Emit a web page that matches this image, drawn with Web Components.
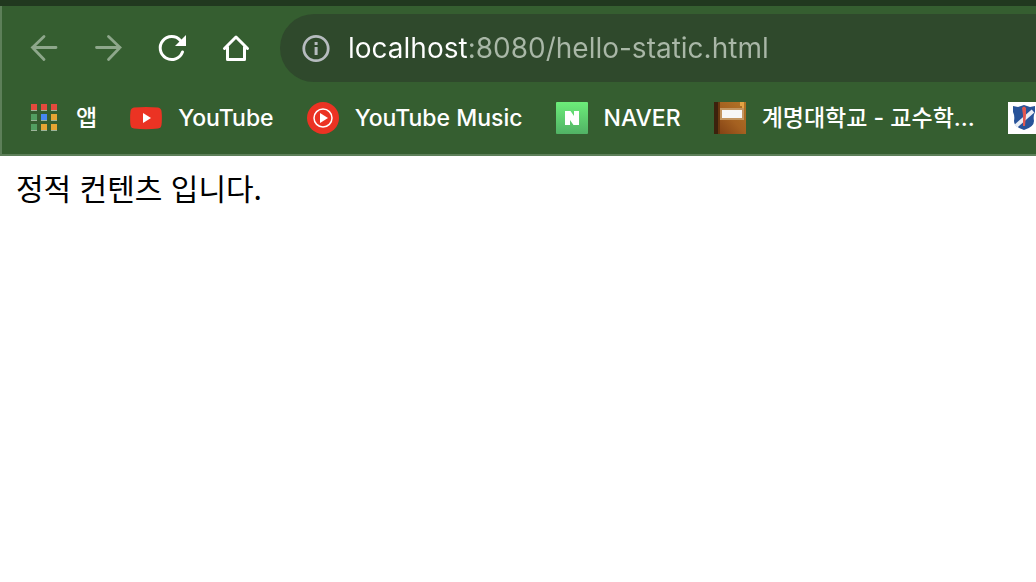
<!DOCTYPE html>
<html lang="ko">
<head>
<meta charset="utf-8">
<title>static content</title>
<style>
html, body { margin: 0; background: #fff; }
body { font-family: Inter, "Noto Sans CJK KR", sans-serif; color: #000; overflow-x: hidden; }
</style>
</head>
<body>
<browser-window></browser-window>
<script>
const define = (name, html) => customElements.define(name, class extends HTMLElement {
  constructor() {
    super();
    this.attachShadow({ mode: 'open' }).innerHTML = html;
  }
  connectedCallback() {
    const button = this.shadowRoot.querySelector('button');
    if (button && this.getAttribute('label')) button.setAttribute('aria-label', this.getAttribute('label'));
    if (button && this.hasAttribute('off')) button.disabled = true;
  }
});

define('nav-button', `
<style>
:host { display: block; flex: none; }
button { display: grid; place-items: center; width: 64px; height: 68px; padding: 0; border: 0; background: none; color: #fff; }
button:disabled { color: #8ea78b; }
</style>
<button type="button"><slot></slot></button>`);

define('address-bar', `
<style>
:host { display: flex; flex: 1; align-items: center; gap: 16px; height: 68px; padding-left: 20px; box-sizing: border-box; border-radius: 34px 0 0 34px; background: #2f492c; }
svg { flex: none; }
input { flex: 1; min-width: 0; height: 40px; padding: 0; border: 0; outline: 0; font: 28px/40px Inter, sans-serif;
  background: linear-gradient(90deg, #fff 120px, #a9b7a7 120px); background-clip: text; -webkit-background-clip: text; color: transparent; }
</style>
<svg width="32" height="32" viewBox="0 0 32 32" aria-hidden="true"><circle cx="16" cy="16.500" r="12.2" fill="none" stroke="#b6bcbf" stroke-width="2.8"/><path d="M14.6 10h3v3h-3zM14.6 15h3v8h-3z" fill="#b6bcbf"/></svg>
<input type="text" aria-label="URL" spellcheck="false" value="localhost:8080/hello-static.html">`);

define('tool-bar', `
<style>
:host { display: flex; padding: 8px 0 4px 10px; }
.nav { display: flex; margin-right: 12px; }
svg { display: block; }
</style>
<div class="nav">
<nav-button label="Back" off><svg width="32" height="32" viewBox="0 0 32 32" fill="none" stroke="currentColor" stroke-width="2.8" stroke-linecap="round"><path d="M28 15.5H4.5M16 4.5l-11.5 11L16 27.5"/></svg></nav-button>
<nav-button label="Forward" off><svg width="32" height="32" viewBox="0 0 32 32" fill="none" stroke="currentColor" stroke-width="2.8" stroke-linecap="round"><path d="M4.5 15.5H28M16.5 4.5l11.5 11-11.5 12"/></svg></nav-button>
<nav-button label="Reload"><svg width="32" height="32" viewBox="0 0 32 32" fill="none"><path d="M26.5 20A11.5 11.5 0 1 1 24.4 8.500" stroke="currentColor" stroke-width="3"  stroke-linecap="round"/><path d="M30 3v11H19z" fill="currentColor"/></svg></nav-button>
<nav-button label="Home"><svg width="32" height="32" viewBox="0 0 32 32" fill="none" stroke="currentColor" stroke-width="3" stroke-linejoin="round" stroke-linecap="round"><path d="M4.5 16.5L16 5l11.500 11.500M7.500 15v12.500h17V15"/></svg></nav-button>
</div>
<address-bar></address-bar>`);

customElements.define('bookmark-link', class extends HTMLElement {
  constructor() {
    super();
    this.attachShadow({ mode: 'open' }).innerHTML = `
<style>
:host { display: block; flex: none; }
a { display: flex; align-items: center; gap: 16px; height: 64px; color: #fff; text-decoration: none; font: 500 23px/32px Inter, "Noto Sans CJK KR", sans-serif; white-space: nowrap; }
::slotted(svg) { display: block; flex: none; }
</style>
<a href="#"><slot name="icon"></slot><span><slot></slot></span></a>`;
    this.shadowRoot.querySelector('a').setAttribute('aria-label', this.getAttribute('label') || this.textContent.trim());
  }
});

define('bookmark-bar', `
<style>
:host { display: flex; gap: 33px; padding: 0 0 4px 26px; overflow: hidden; }
svg { width: 32px; height: 32px; }
</style>
<bookmark-link><svg slot="icon" viewBox="0 0 32 32"><g fill="#9db59a"><path d="M3 5h6v3H3zM13 5h6v3h-6zM23 5h6v3h-6zM3 15h6v3H3zM13 15h6v3h-6zM23 15h6v3h-6zM3 25h6v3H3zM13 25h6v3h-6zM23 25h6v3h-6z"/></g><path fill="#e44a3d" d="M3 2h6v6H3zM13 2h6v6h-6zM23 2h6v6h-6z"/><path fill="#529e61" d="M3 12h6v6H3zM3 22h6v6H3z"/><path fill="#4688f1" d="M13 12h6v6h-6z"/><path fill="#e6a533" d="M23 12h6v6h-6zM13 22h6v6h-6zM23 22h6v6h-6z"/><path fill="#9db59a" d="M3 8h6v1H3zM13 8h6v1h-6zM23 8h6v1h-6zM3 18h6v1H3zM13 18h6v1h-6zM23 18h6v1h-6zM3 28h6v1H3zM13 28h6v1h-6zM23 28h6v1h-6z"/></svg>앱</bookmark-link>
<bookmark-link><svg slot="icon" viewBox="0 0 32 32"><path fill="#eb3323" d="M4 5.500Q16 4.500 28 5.500Q31 6 31.500 9Q32.300 16 31.500 23Q31 26 28 26.500Q16 27.800 4 26.500Q1 26 .5 23Q-.3 16 .5 9Q1 6 4 5.500z"/><path fill="#fff" d="M13 11l8 5-8 5z"/></svg>YouTube</bookmark-link>
<bookmark-link><svg slot="icon" viewBox="0 0 32 32"><circle cx="16" cy="16" r="16" fill="#eb3323"/><circle cx="16" cy="16" r="9" fill="none" stroke="#fff" stroke-width="1.500"/><path fill="#fff" d="M13 11l8 5-8 5z"/></svg>YouTube Music</bookmark-link>
<bookmark-link><svg slot="icon" viewBox="0 0 32 32"><defs><linearGradient id="g" x2="0" y2="1"><stop stop-color="#6ced79"/><stop offset="1" stop-color="#51b265"/></linearGradient></defs><rect width="32" height="32" rx="1" fill="url(#g)"/><path fill="#fff" d="M9 9h5.500l3.500 5V9h5v14h-5.500L14 18v5H9z"/></svg>NAVER</bookmark-link>
<bookmark-link><svg slot="icon" viewBox="0 0 32 32"><defs><linearGradient id="b" x1="1" x2="0" y2="1"><stop stop-color="#b27527"/><stop offset=".5" stop-color="#a46020"/><stop offset="1" stop-color="#7c3c12"/></linearGradient></defs><path fill="url(#b)" d="M0 0h32v32H0z"/><path fill="#3c210c" d="M0 0h4v32H0z"/><path fill="#67370f" d="M4 0h2v32H4z"/><path fill="#e4a344" d="M26 0h4v6h-2V4h-2z"/><path fill="#c39560" d="M6 6h24v12H6z"/><path fill="#f7f7f7" d="M8 8h20v8H8z"/></svg>계명대학교 - 교수학...</bookmark-link>
<bookmark-link label="Bookmark"><svg slot="icon" viewBox="0 0 32 32"><path fill="#fff" d="M0 0h32v32H0z"/><path fill="#285399" d="M5 4l5 1 6-2 6 2 5-1v6q-2 4-1 9 0 6-10 9Q6 25 6 19q1-5-1-9z"/><path stroke="#e8edf5" stroke-width="4" d="M8 24L25 9"/><path fill="#df5851" d="M14 6q2-3 4 0v7l-1 11h-2V13z"/></svg></bookmark-link>`);

define('page-view', `
<style>
:host { display: block; padding: 11px 16px; }
p { margin: 0; font: 30px/40px "Noto Sans CJK KR", sans-serif; }
</style>
<p><slot></slot></p>`);

define('browser-window', `
<style>
:host { display: block; }
header { border-top: 6px solid #21381f; background: #355e30; }
.chrome { border-left: 2px solid #5d7f59; border-bottom: 2px solid #5d7f59; }
</style>
<header><div class="chrome"><tool-bar></tool-bar><bookmark-bar></bookmark-bar></div></header>
<main><page-view>정적 컨텐츠 입니다.</page-view></main>`);
</script>
</body>
</html>
